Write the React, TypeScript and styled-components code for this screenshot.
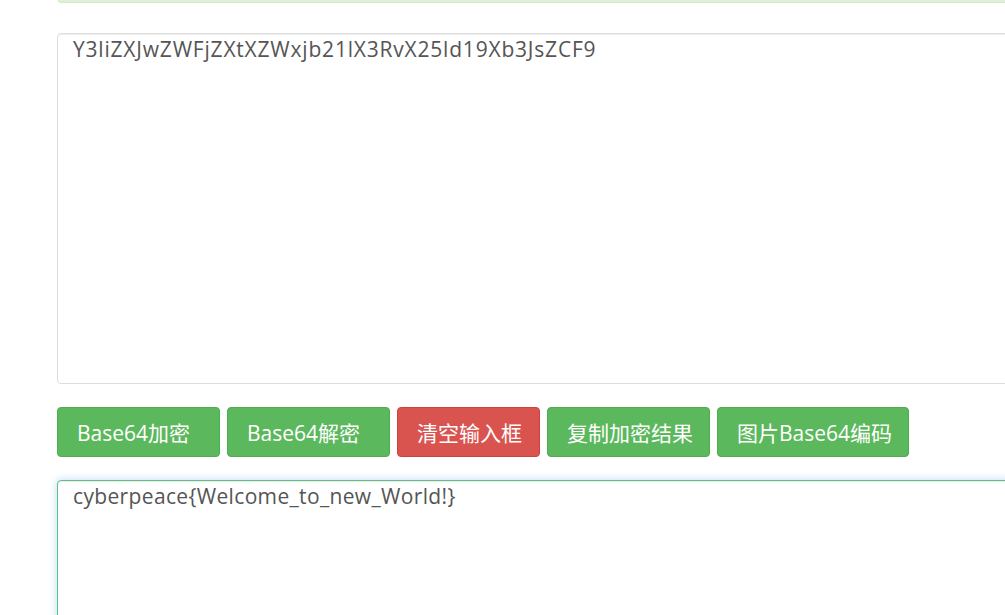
import React from 'react';
import styled, {createGlobalStyle} from 'styled-components';

const GlobalStyle = createGlobalStyle`
  html, body {
    margin: 0;
    padding: 0;
    background: #fff;
    overflow: hidden;
  }

  body {
    font-family: "Open Sans", "Noto Sans CJK SC", sans-serif;
  }
`;

const Page = styled.div`
  display: flex;
  flex-direction: column;

  width: 1160px;
  padding-left: 57px;
`;

const Alert = styled.div`
  height: 2px;
  margin-left: 1px;

  border: 1px solid #d6e9c6;
  border-top: none;
  border-radius: 0 0 4px 4px;

  background: #dff0d8;
`;

const TextArea = styled.textarea<{focused?: boolean; boxHeight: number; spacing: number}>`
  box-sizing: border-box;
  display: block;

  width: 100%;
  height: ${({boxHeight}) => boxHeight + `px`};

  padding: 2px 15px;
  border: 1px solid ${({focused}) => (focused ? `#5fbf83` : `#ddd`)};
  border-radius: 4px;

  box-shadow: ${({focused}) =>
    focused
      ? `inset 0 1px 1px rgba(0, 0, 0, .075), 0 0 8px rgba(102, 175, 233, .45)`
      : `inset 0 1px 1px rgba(0, 0, 0, .075)`};

  font-family: "Open Sans", "Noto Sans CJK SC", sans-serif;
  font-size: 21px;
  letter-spacing: ${({spacing}) => spacing + `px`};
  line-height: 1.3;
  color: #555;

  resize: none;
  outline: none;
`;

const Source = styled(TextArea)`
  margin-top: 30px;
`;

const Result = styled(TextArea)`
  margin-top: 23px;
`;

const Toolbar = styled.div`
  display: flex;
  gap: 7px;

  margin-top: 23px;
`;

const Button = styled.button<{danger?: boolean}>`
  box-sizing: border-box;
  height: 50px;

  padding: 0 0 0 19px;
  border: 1px solid ${({danger}) => (danger ? `#d43f3a` : `#4cae4c`)};
  border-radius: 4px;

  background: ${({danger}) => (danger ? `#d9534f` : `#5cb85c`)};

  font-family: "Open Sans", "Noto Sans CJK SC", sans-serif;
  font-size: 21px;
  text-align: left;
  color: #fff;

  cursor: pointer;
`;

const buttons = [
  {label: `Base64加密`, width: 163},
  {label: `Base64解密`, width: 163},
  {label: `清空输入框`, width: 143, danger: true},
  {label: `复制加密结果`, width: 163},
  {label: `图片Base64编码`, width: 192},
];

const App = () => {
  return (
    <>
      <GlobalStyle />
      <Page>
        <Alert />
        <Source
          boxHeight = {351}
          spacing = {0.8}
          readOnly
          defaultValue = "Y3liZXJwZWFjZXtXZWxjb21lX3RvX25ld19Xb3JsZCF9"
        />
        <Toolbar>
          {
            buttons.map((b, i) => (
              <Button key = {i} danger = {b.danger} style = {{width: b.width}}>{b.label}</Button>
            ))
          }
        </Toolbar>
        <Result
          boxHeight = {200}
          spacing = {0.35}
          focused
          defaultValue = "cyberpeace{Welcome_to_new_World!}"
        />
      </Page>
    </>
  );
};

export default App;
